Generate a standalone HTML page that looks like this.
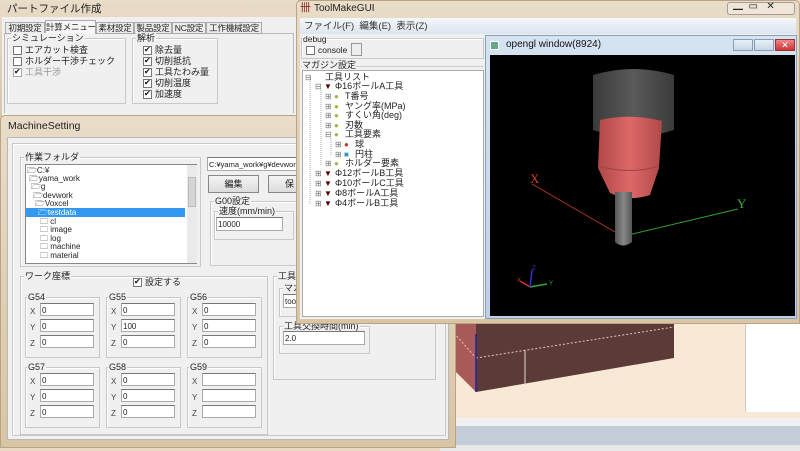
<!DOCTYPE html>
<html><head><meta charset="utf-8"><style>
*{margin:0;padding:0;box-sizing:border-box}
body{width:800px;height:451px;overflow:hidden;position:relative;background:#ecd9c4;font-family:"Liberation Sans","Noto Sans CJK JP",sans-serif;font-size:9px;color:#222;line-height:1.1}
.a{position:absolute}
.t{position:absolute;white-space:nowrap;line-height:11px}
.gb{position:absolute;border:1px solid #c8c8c8;box-shadow:inset 1px 1px 0 #fff}
.gl{position:absolute;top:-6px;left:3px;background:#f0f0f0;padding:0 1px;white-space:nowrap;font-size:9px;line-height:10px}
.cb{position:absolute;width:9px;height:9px;border:1px solid #777;background:#fff}
.ck::after{content:"✔";position:absolute;left:0;top:-2px;font-size:8px;line-height:10px;color:#111}
.in{position:absolute;background:#fff;border:1px solid #aaa;border-top-color:#777;height:14px;font-size:8px;padding:2px 1px;line-height:9px}
.ttl{background:linear-gradient(#e9dcc8,#d9c4a6)}
.tab{position:absolute;top:22px;height:12px;border:1px solid #aaa;background:#ececec;font-size:8.5px;line-height:10px;text-align:center;white-space:nowrap;letter-spacing:-0.2px}
</style></head><body>

<div class="a" style="left:440px;top:300px;width:360px;height:120px;background:#f8e8d6"></div>
<svg class="a" style="left:440px;top:300px" width="360" height="120">
<polygon points="14,20 36,20 36,92 14,70" fill="#a85a58"/>
<polygon points="36,20 234,20 234,58 36,92" fill="#5c3a38"/>
<polyline points="36,58 234,27" stroke="#e0c8c0" stroke-dasharray="2,2" fill="none"/>
<polyline points="14,33 36,58" stroke="#e0c8c0" stroke-dasharray="2,2" fill="none"/>
<line x1="36" y1="34" x2="36" y2="92" stroke="#2020a0" stroke-width="1.5"/>
<line x1="85" y1="50" x2="85" y2="85" stroke="#ddd"/>
</svg>
<div class="a" style="left:745px;top:320px;width:55px;height:92px;background:#fff;border-left:1px solid #ccc"></div>
<div class="a" style="left:440px;top:418px;width:360px;height:8px;background:#f0f0f0"></div>
<div class="a" style="left:440px;top:426px;width:360px;height:19px;background:#c2cdd8"></div>
<div class="a" style="left:440px;top:445px;width:360px;height:6px;background:#e8e8e8"></div>

<!-- Part file window -->
<div class="a ttl" style="left:0;top:0;width:300px;height:120px;border-right:2px solid #c9b69a"></div>
<div class="t" style="left:7px;top:3px;font-size:10.5px;line-height:12px;color:#222">パートファイル作成</div>
<div class="a" style="left:2px;top:17px;width:294px;height:100px;background:#f0f0f0"></div>
<div class="a" style="left:4px;top:33px;width:290px;height:80px;border:1px solid #bbb;border-bottom:none"></div>
<div class="tab" style="left:5px;width:40px">初期設定</div>
<div class="tab" style="left:45px;top:20px;width:51px;height:14px;border-bottom:none;background:#f6f6f6;line-height:12px">計算メニュー</div>
<div class="tab" style="left:96px;width:38px">素材設定</div>
<div class="tab" style="left:134px;width:38px">製品設定</div>
<div class="tab" style="left:172px;width:34px">NC設定</div>
<div class="tab" style="left:206px;width:56px">工作機械設定</div>
<div class="gb" style="left:7px;top:38px;width:119px;height:66px"><span class="gl">シミュレーション</span></div>
<div class="cb" style="left:13px;top:46px"></div><div class="t" style="left:25px;top:45px">エアカット検査</div>
<div class="cb" style="left:13px;top:57px"></div><div class="t" style="left:25px;top:56px">ホルダー干渉チェック</div>
<div class="cb ck" style="left:13px;top:68px;border-color:#aaa"></div><div class="t" style="left:25px;top:67px;color:#999">工具干渉</div>
<div class="gb" style="left:132px;top:38px;width:86px;height:66px"><span class="gl">解析</span></div>
<div class="cb ck" style="left:143px;top:46px"></div><div class="t" style="left:155px;top:45px">除去量</div>
<div class="cb ck" style="left:143px;top:57px"></div><div class="t" style="left:155px;top:56px">切削抵抗</div>
<div class="cb ck" style="left:143px;top:68px"></div><div class="t" style="left:155px;top:67px">工具たわみ量</div>
<div class="cb ck" style="left:143px;top:79px"></div><div class="t" style="left:155px;top:78px">切削温度</div>
<div class="cb ck" style="left:143px;top:90px"></div><div class="t" style="left:155px;top:89px">加速度</div>

<!-- MachineSetting -->
<div class="a ttl" style="left:0;top:115px;width:456px;height:333px;border:1px solid #b9a484;border-radius:5px 5px 0 0"></div>
<div class="t" style="left:8px;top:120px;font-size:10.5px;line-height:12px">MachineSetting</div>
<div class="a" style="left:7px;top:137px;width:442px;height:303px;background:#f0f0f0;border:1px solid #b8b8b8"></div>
<div class="a" style="left:12px;top:143px;width:434px;height:293px;border:1px solid #c8c8c8;box-shadow:inset 1px 1px 0 #fff"></div>
<div class="gb" style="left:20px;top:157px;width:181px;height:110px"><span class="gl">作業フォルダ</span></div>
<div class="a" style="left:25px;top:164px;width:172px;height:100px;background:#fff;border:1px solid #888"></div>
<div class="a" style="left:187px;top:165px;width:10px;height:98px;background:#eaeaea"></div>
<div class="a" style="left:188px;top:177px;width:8px;height:30px;background:#d4d4d4;border:1px solid #bbb"></div>
<div class="a" style="left:26px;top:208px;width:159px;height:9px;background:#3399ee"></div>
<div style="font-size:8px">
<div class="t" style="left:27px;top:166px;line-height:9px">🗁C:¥</div>
<div class="t" style="left:29px;top:174px;line-height:9px">🗁yama_work</div>
<div class="t" style="left:31px;top:182px;line-height:9px">🗁g</div>
<div class="t" style="left:33px;top:191px;line-height:9px">🗁devwork</div>
<div class="t" style="left:35px;top:199px;line-height:9px">🗁Voxcel</div>
<div class="t" style="left:38px;top:208px;line-height:9px;color:#fff">🗁testdata</div>
<div class="t" style="left:40px;top:217px;line-height:9px">🗀 cl</div>
<div class="t" style="left:40px;top:225px;line-height:9px">🗀 image</div>
<div class="t" style="left:40px;top:234px;line-height:9px">🗀 log</div>
<div class="t" style="left:40px;top:242px;line-height:9px">🗀 machine</div>
<div class="t" style="left:40px;top:251px;line-height:9px">🗀 material</div>
</div>
<div class="in" style="left:207px;top:157px;width:95px;font-size:7.5px">C:¥yama_work¥g¥devwor</div>
<div class="a" style="left:208px;top:175px;width:51px;height:18px;border:1px solid #888;background:linear-gradient(#f4f4f4,#dcdcdc);text-align:center;line-height:16px;font-size:9px">編集</div>
<div class="a" style="left:268px;top:175px;width:34px;height:18px;border:1px solid #888;background:linear-gradient(#f4f4f4,#dcdcdc);line-height:16px;font-size:9px;padding-left:16px">保</div>
<div class="gb" style="left:210px;top:201px;width:92px;height:65px"><span class="gl">G00設定</span></div>
<div class="gb" style="left:214px;top:211px;width:80px;height:29px"><span class="gl">速度(mm/min)</span></div>
<div class="in" style="left:216px;top:217px;width:67px">10000</div>

<div class="gb" style="left:20px;top:276px;width:248px;height:159px"><span class="gl">ワーク座標</span></div>
<div class="cb ck" style="left:133px;top:278px"></div><div class="t" style="left:145px;top:277px">設定する</div>
<div id="grids"></div>
<div class="gb" style="left:273px;top:276px;width:163px;height:104px"><span class="gl">工具</span></div>
<div class="gb" style="left:279px;top:288px;width:90px;height:29px"><span class="gl">マガ</span></div>
<div class="in" style="left:283px;top:294px;width:80px">too</div>
<div class="gb" style="left:279px;top:326px;width:91px;height:28px"><span class="gl">工具交換時間(min)</span></div>
<div class="in" style="left:283px;top:331px;width:82px">2.0</div>

<!-- ToolMakeGUI -->
<div class="a ttl" style="left:296px;top:0;width:504px;height:324px;border:1px solid #b9a484;border-radius:5px 5px 0 0"></div>
<div class="t" style="left:300px;top:3px;font-size:11px;color:#822">卌</div>
<div class="t" style="left:314px;top:3px;font-size:10px;line-height:12px">ToolMakeGUI</div>
<div class="a" style="left:727px;top:2px;width:68px;height:13px;border:1px solid #a99;border-radius:3px;background:rgba(255,255,255,.3)"></div>
<div class="t" style="left:733px;top:1px;font-size:10px">▁&nbsp;&nbsp;▭&nbsp;&nbsp;&nbsp;✕</div>
<div class="a" style="left:300px;top:18px;width:496px;height:301px;background:#f0f0f0"></div>
<div class="a" style="left:300px;top:18px;width:496px;height:16px;background:linear-gradient(#f4f7fb,#dde5ef)"></div>
<div class="t" style="left:304px;top:21px;font-size:9.5px;color:#333">ファイル(F)&nbsp;&nbsp;編集(E)&nbsp;&nbsp;表示(Z)</div>
<div class="gb" style="left:301px;top:38px;width:183px;height:21px;border-top-color:#ccc"></div>
<div class="t" style="left:303px;top:34px;font-size:8.5px;background:#f0f0f0">debug</div>
<div class="cb" style="left:306px;top:46px"></div><div class="t" style="left:318px;top:45px;font-size:8.5px">console</div>
<div class="a" style="left:351px;top:43px;width:11px;height:13px;border:1px solid #999;background:#eee"></div>
<div class="a" style="left:301px;top:66px;width:183px;height:1px;background:#ccc"></div>
<div class="t" style="left:302px;top:60px;font-size:9px;background:#f0f0f0">マガジン設定</div>
<div class="a" style="left:302px;top:70px;width:182px;height:247px;background:#fff;border:1px solid #aaa"></div>
<svg class="a" style="left:302px;top:70px" width="182" height="150">
<g stroke="#aaa" stroke-dasharray="1,1" fill="none">
<line x1="8" y1="7" x2="8" y2="135"/><line x1="19" y1="20" x2="19" y2="95"/><line x1="29" y1="68" x2="29" y2="85"/>
</g>
</svg>
<div style="font-size:9px">
<div class="t" style="left:305px;top:72px;font-size:8px;color:#777">⊟</div><div class="t" style="left:325px;top:72px">工具リスト</div>
<div class="t" style="left:315px;top:81px;font-size:8px;color:#777">⊟ <span style="color:#500">▼</span></div><div class="t" style="left:335px;top:81px">Φ16ボールA工具</div>
<div class="t" style="left:325px;top:91px;font-size:8px;color:#777">⊞ <span style="color:#9b4">●</span></div><div class="t" style="left:345px;top:91px">T番号</div>
<div class="t" style="left:325px;top:101px;font-size:8px;color:#777">⊞ <span style="color:#9b4">●</span></div><div class="t" style="left:345px;top:101px">ヤング率(MPa)</div>
<div class="t" style="left:325px;top:110px;font-size:8px;color:#777">⊞ <span style="color:#9b4">●</span></div><div class="t" style="left:345px;top:110px">すくい角(deg)</div>
<div class="t" style="left:325px;top:120px;font-size:8px;color:#777">⊞ <span style="color:#9b4">●</span></div><div class="t" style="left:345px;top:120px">刃数</div>
<div class="t" style="left:325px;top:129px;font-size:8px;color:#777">⊟ <span style="color:#9b4">●</span></div><div class="t" style="left:345px;top:129px">工具要素</div>
<div class="t" style="left:335px;top:139px;font-size:8px;color:#777">⊞ <span style="color:#c33">●</span></div><div class="t" style="left:355px;top:139px">球</div>
<div class="t" style="left:335px;top:149px;font-size:8px;color:#777">⊞ <span style="color:#39b">■</span></div><div class="t" style="left:355px;top:149px">円柱</div>
<div class="t" style="left:325px;top:158px;font-size:8px;color:#777">⊞ <span style="color:#9b4">●</span></div><div class="t" style="left:345px;top:158px">ホルダー要素</div>
<div class="t" style="left:315px;top:168px;font-size:8px;color:#777">⊞ <span style="color:#500">▼</span></div><div class="t" style="left:335px;top:168px">Φ12ボールB工具</div>
<div class="t" style="left:315px;top:178px;font-size:8px;color:#777">⊞ <span style="color:#500">▼</span></div><div class="t" style="left:335px;top:178px">Φ10ボールC工具</div>
<div class="t" style="left:315px;top:188px;font-size:8px;color:#777">⊞ <span style="color:#500">▼</span></div><div class="t" style="left:335px;top:188px">Φ8ボールA工具</div>
<div class="t" style="left:315px;top:198px;font-size:8px;color:#777">⊞ <span style="color:#500">▼</span></div><div class="t" style="left:335px;top:198px">Φ4ボールB工具</div>
</div>

<!-- opengl window -->
<div class="a" style="left:485px;top:35px;width:312px;height:284px;background:linear-gradient(#d6e3f1,#bcd0e6);border:1px solid #8aa0b8"></div>
<div class="a" style="left:490px;top:41px;width:9px;height:9px;background:#6a8;border:1px solid #fff"></div>
<div class="t" style="left:506px;top:39px;font-size:10px;line-height:12px;color:#111">opengl window(8924)</div>
<div class="a" style="left:733px;top:39px;width:20px;height:12px;border:1px solid #8a9cb2;background:linear-gradient(#e8f0f8,#c8d6e6)"></div>
<div class="a" style="left:754px;top:39px;width:20px;height:12px;border:1px solid #8a9cb2;background:linear-gradient(#e8f0f8,#c8d6e6)"></div>
<div class="a" style="left:775px;top:39px;width:20px;height:12px;border:1px solid #933;background:linear-gradient(#e88,#c33);color:#fff;font-size:9px;text-align:center;line-height:11px">✕</div>
<div class="a" style="left:490px;top:55px;width:305px;height:261px;background:#000"></div>
<svg class="a" style="left:490px;top:55px" width="305" height="261">
<defs>
<linearGradient id="g1" x1="0" x2="1"><stop offset="0" stop-color="#3a3a3a"/><stop offset=".5" stop-color="#5a5a5a"/><stop offset="1" stop-color="#3a3a3a"/></linearGradient>
<linearGradient id="r1" x1="0" x2="1"><stop offset="0" stop-color="#b04848"/><stop offset=".5" stop-color="#de6868"/><stop offset="1" stop-color="#b04848"/></linearGradient>
<linearGradient id="s1" x1="0" x2="1"><stop offset="0" stop-color="#555"/><stop offset=".5" stop-color="#888"/><stop offset="1" stop-color="#555"/></linearGradient>
</defs>
<line x1="42" y1="129" x2="125" y2="177" stroke="#b03820" stroke-width="1"/>
<text x="40" y="128" fill="#c84020" font-family="Liberation Serif" font-size="13">X</text>
<line x1="138" y1="180" x2="248" y2="154" stroke="#30a030" stroke-width="1"/>
<text x="247" y="153" fill="#40b040" font-family="Liberation Serif" font-size="13">Y</text>
<path d="M103,20 Q144,8 184,20 L184,75 Q144,88 103,75 Z" fill="url(#g1)"/>
<path d="M110,65 Q140,58 172,66 L169,113 L160,140 Q139,147 120,138 L108,113 Z" fill="url(#r1)"/>
<path d="M108,111 Q140,120 169,111" stroke="#a04040" fill="none"/>
<path d="M125,137 L142,137 L142,187 Q133,194 125,187 Z" fill="url(#s1)"/>
<g stroke-width="1.5"><line x1="40" y1="232" x2="30" y2="226" stroke="#c33"/><line x1="40" y1="232" x2="57" y2="229" stroke="#3a3"/><line x1="40" y1="232" x2="42" y2="215" stroke="#33c"/></g>
<text x="27" y="227" fill="#c33" font-size="6">X</text><text x="59" y="230" fill="#3a3" font-size="6">Y</text><text x="42" y="215" fill="#33c" font-size="6">Z</text>
</svg>

<script>
var h='',gx=[25,106,187],gy=[297,367],n=['G54','G55','G56','G57','G58','G59'];
var vals=[['0','0','0'],['0','100','0'],['0','0','0'],['0','0','0'],['0','0','0'],['','','']];
for(var r=0;r<2;r++)for(var c=0;c<3;c++){var k=r*3+c,x=gx[c],y=gy[r];
h+='<div class="gb" style="left:'+x+'px;top:'+y+'px;width:75px;height:61px"><span class="gl" style="left:1px">'+n[k]+'</span></div>';
['X','Y','Z'].forEach(function(l,i){h+='<div class="t" style="left:'+(x+5)+'px;top:'+(y+9+i*16)+'px;font-size:8px;color:#444">'+l+'</div><div class="in" style="left:'+(x+15)+'px;top:'+(y+6+i*16)+'px;width:54px;height:13px">'+vals[k][i]+'</div>';});}
document.getElementById('grids').innerHTML=h;
</script>
</body></html>
